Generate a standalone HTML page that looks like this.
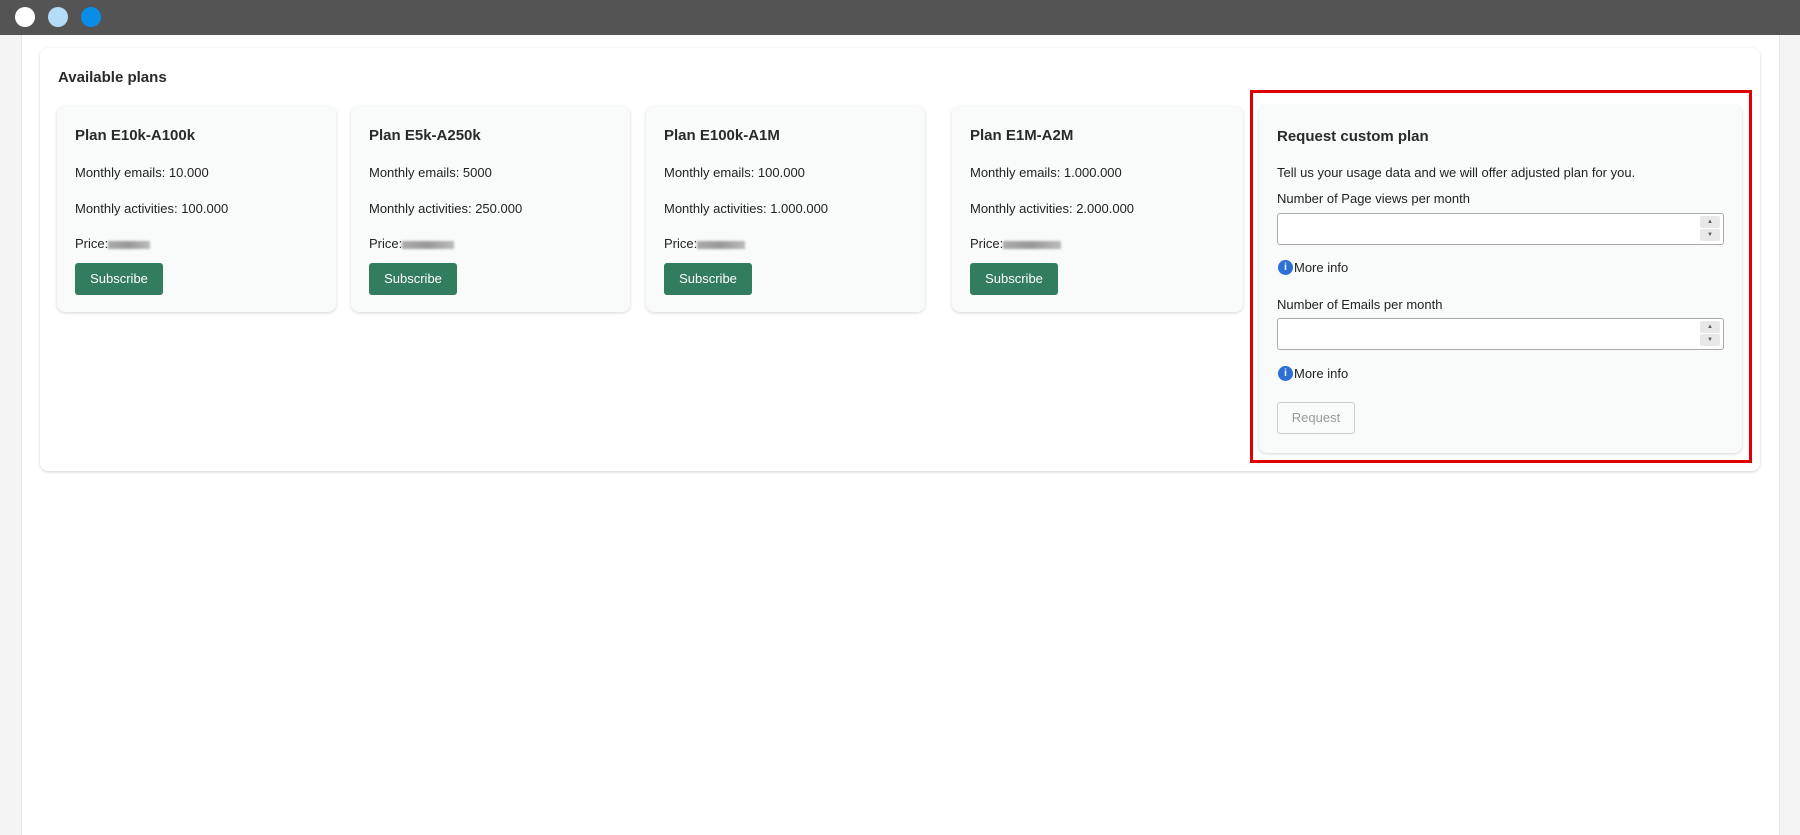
<!DOCTYPE html>
<html><head><meta charset="utf-8"><style>
*{box-sizing:border-box;margin:0;padding:0}
body{width:1800px;height:835px;background:#fff;font-family:"Liberation Sans",Arial,sans-serif;color:#222;position:relative;overflow:hidden}
.bar{position:absolute;left:0;top:0;width:1800px;height:35px;background:#545454}
.dot{position:absolute;top:7px;width:20px;height:20px;border-radius:50%}
.ls{position:absolute;left:0;top:35px;width:22px;height:800px;background:#f4f4f4;border-right:1px solid #e6e6e6}
.rs{position:absolute;left:1779px;top:35px;width:21px;height:800px;background:#f4f4f4;border-left:1px solid #e6e6e6}
.outer{position:absolute;left:40px;top:48px;width:1720px;height:423px;background:#fff;border-radius:8px;box-shadow:0 1px 3px rgba(0,0,0,.18)}
.h{position:absolute;left:58px;top:69px;font-size:15px;font-weight:bold;color:#2a2a2a}
.card{position:absolute;top:106px;height:206px;background:#f9fafa;border-radius:8px;box-shadow:0 1px 3px rgba(0,0,0,.16)}
.t{position:absolute;left:18px;top:21px;font-size:15px;font-weight:bold;color:#2a2a2a}
.l{position:absolute;left:18px;font-size:13px}
.btn{position:absolute;left:18px;top:157px;width:88px;height:32px;background:#327d5d;color:#fff;border-radius:3px;font-size:13px;text-align:center;line-height:32px}
.blur{display:inline-block;width:42px;height:8px;background:linear-gradient(90deg,#aaa,#999,#bbb);vertical-align:middle;filter:blur(1px)}
.red{position:absolute;left:1250px;top:90px;width:502px;height:373px;border:3.5px solid #e00000}
.cc{position:absolute;left:1259px;top:105px;width:483px;height:348px;background:#f9fafa;border-radius:8px;box-shadow:0 1px 3px rgba(0,0,0,.16)}
.cc .t{top:23px}
.cc .l{left:18px}
.inp{position:absolute;left:18px;width:447px;height:32px;background:#fff;border:1px solid #aaa;border-radius:3px}
.sp{position:absolute;right:3px;width:20px;height:12px;background:#e8e8e8;border-radius:2px;font-size:6px;color:#555;text-align:center;line-height:12px}
.info{position:absolute;left:19px;font-size:13px;display:flex;align-items:center}
.info i{display:inline-block;width:15px;height:15px;border-radius:50%;background:#2e6fd6;color:#fff;font-style:normal;font-weight:bold;font-size:10px;text-align:center;line-height:15px;margin-right:1px}
.rq{position:absolute;left:18px;top:297px;width:78px;height:32px;border:1px solid #ccc;border-radius:3px;color:#999;font-size:13px;text-align:center;line-height:30px}
</style></head><body>
<div class="bar"><div class="dot" style="left:15px;background:#fff"></div><div class="dot" style="left:48px;background:#b3dcf7"></div><div class="dot" style="left:81px;background:#0a8de6"></div></div>
<div class="ls"></div><div class="rs"></div>
<div class="outer"></div>
<div class="h">Available plans</div>

<div class="card" style="left:57px;width:279px"><div class="t">Plan E10k-A100k</div><div class="l" style="top:59px">Monthly emails: 10.000</div><div class="l" style="top:95px">Monthly activities: 100.000</div><div class="l" style="top:130px">Price:<span class="blur"></span></div><div class="btn">Subscribe</div></div>
<div class="card" style="left:351px;width:279px"><div class="t">Plan E5k-A250k</div><div class="l" style="top:59px">Monthly emails: 5000</div><div class="l" style="top:95px">Monthly activities: 250.000</div><div class="l" style="top:130px">Price:<span class="blur" style="width:52px"></span></div><div class="btn">Subscribe</div></div>
<div class="card" style="left:646px;width:279px"><div class="t">Plan E100k-A1M</div><div class="l" style="top:59px">Monthly emails: 100.000</div><div class="l" style="top:95px">Monthly activities: 1.000.000</div><div class="l" style="top:130px">Price:<span class="blur" style="width:48px"></span></div><div class="btn">Subscribe</div></div>
<div class="card" style="left:952px;width:291px"><div class="t">Plan E1M-A2M</div><div class="l" style="top:59px">Monthly emails: 1.000.000</div><div class="l" style="top:95px">Monthly activities: 2.000.000</div><div class="l" style="top:130px">Price:<span class="blur" style="width:58px"></span></div><div class="btn">Subscribe</div></div>

<div class="red"></div>
<div class="cc">
<div class="t">Request custom plan</div>
<div class="l" style="top:60px">Tell us your usage data and we will offer adjusted plan for you.</div>
<div class="l" style="top:86px">Number of Page views per month</div>
<div class="inp" style="top:108px"><div class="sp" style="top:2px">▲</div><div class="sp" style="top:15px">▼</div></div>
<div class="info" style="top:155px"><i>i</i>More info</div>
<div class="l" style="top:192px">Number of Emails per month</div>
<div class="inp" style="top:213px"><div class="sp" style="top:2px">▲</div><div class="sp" style="top:15px">▼</div></div>
<div class="info" style="top:261px"><i>i</i>More info</div>
<div class="rq">Request</div>
</div>
</body></html>
